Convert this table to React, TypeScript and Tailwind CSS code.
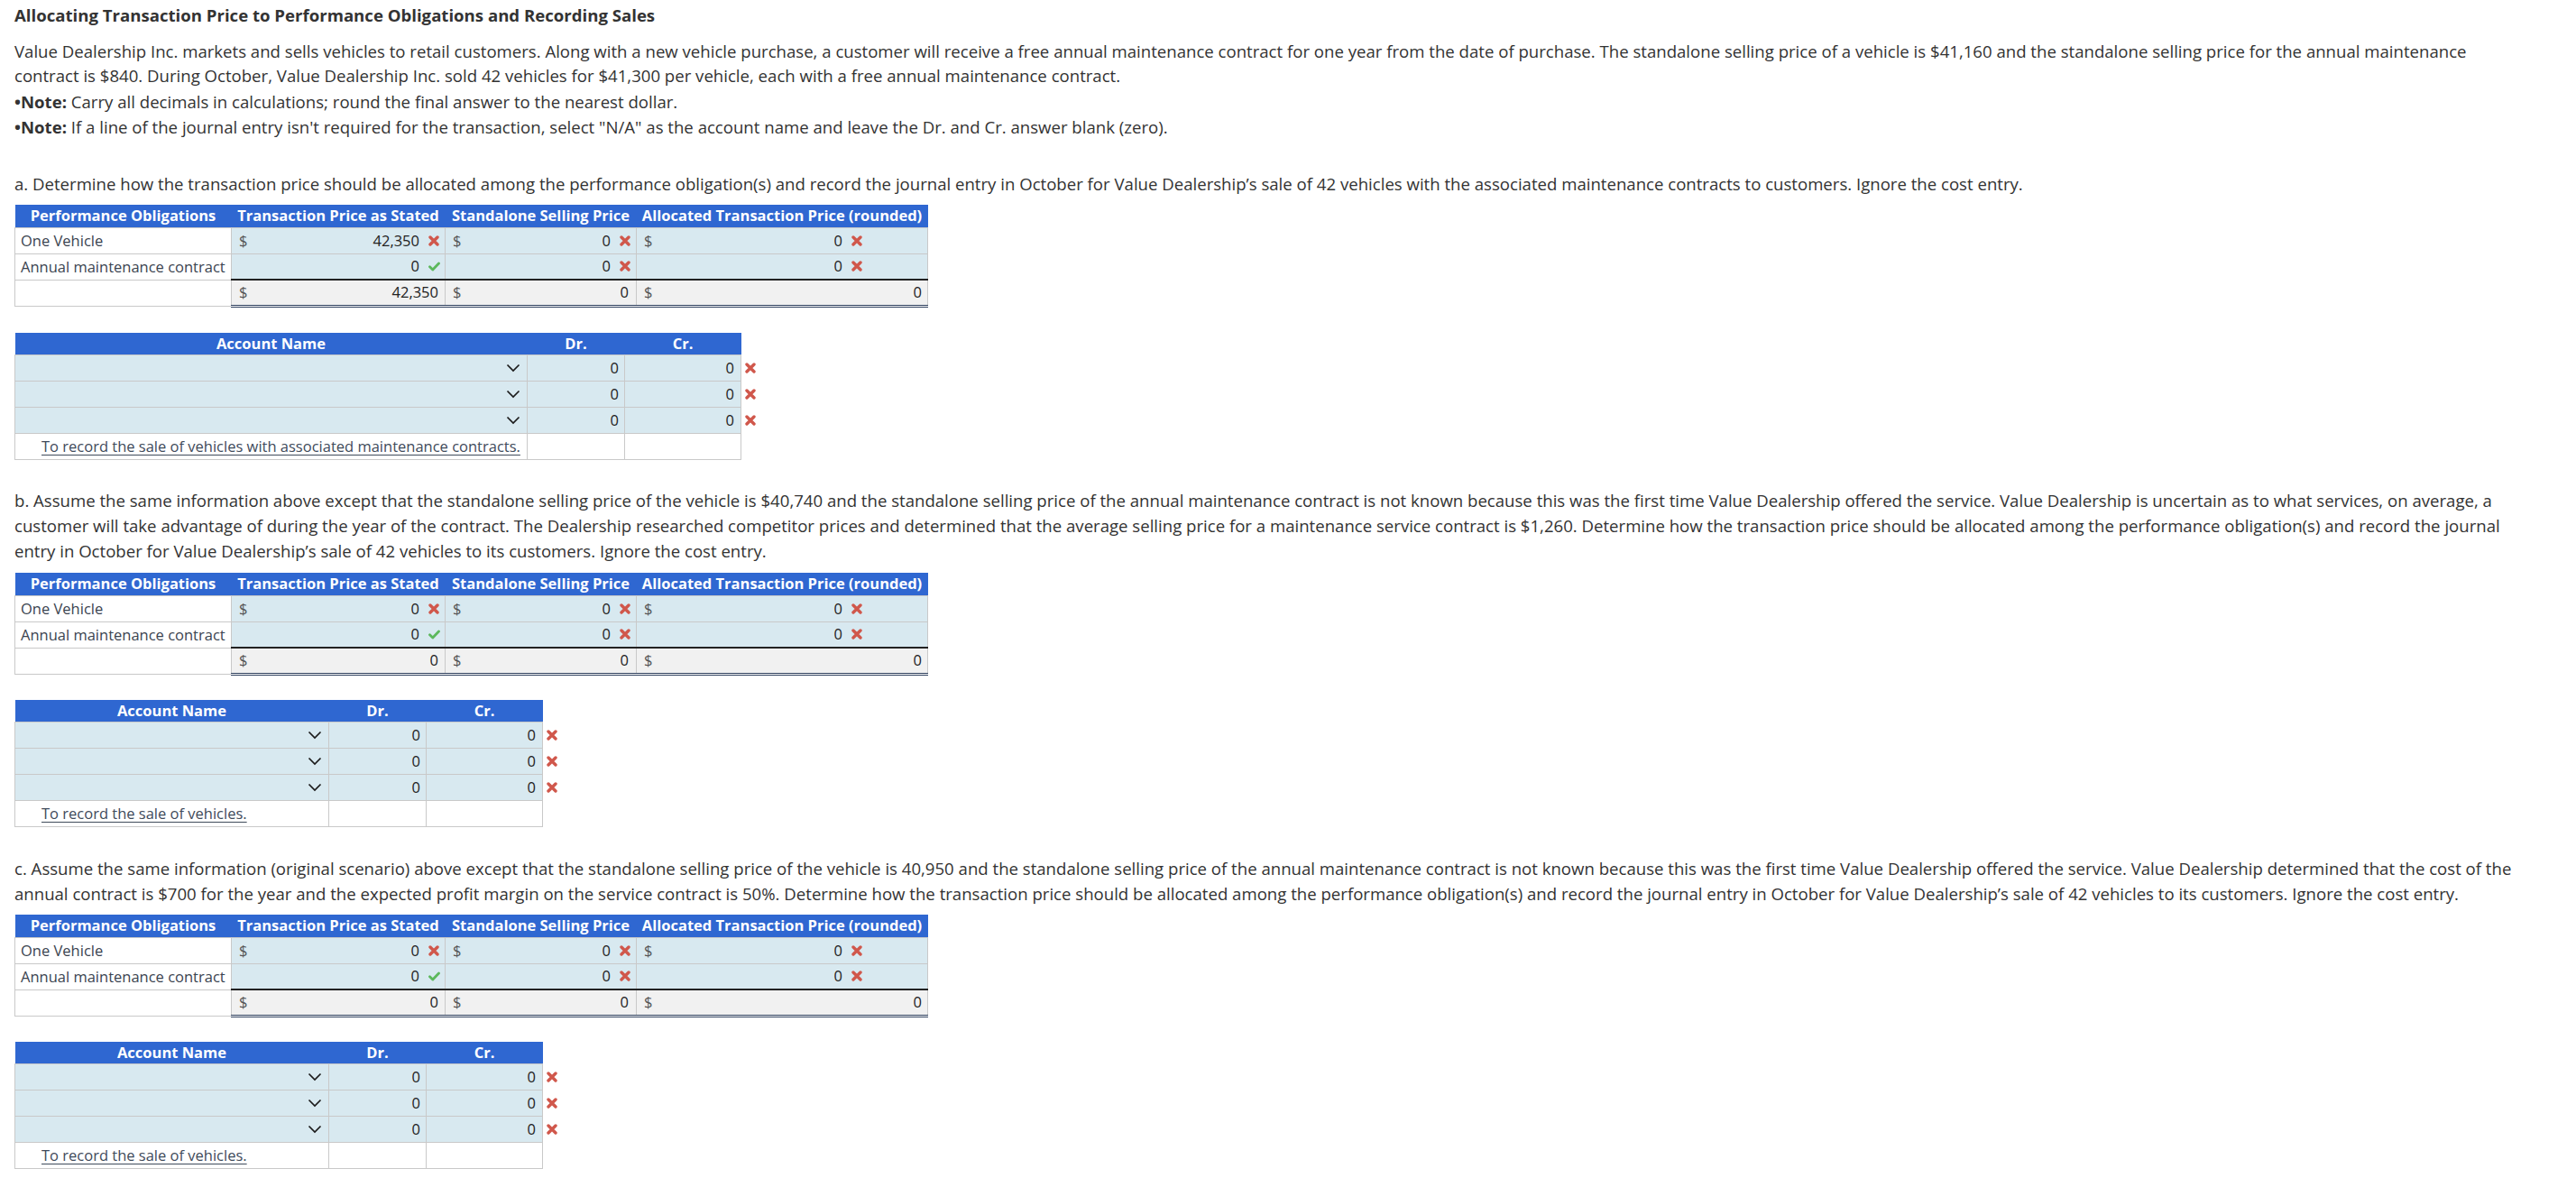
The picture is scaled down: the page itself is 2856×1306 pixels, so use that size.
import React from 'react';

type Mark = 'x' | 'check';

function Cross() {
  return (
    <svg width="12" height="12" viewBox="0 0 12 12" className="block">
      <path d="M2 2 L10 10 M10 2 L2 10" stroke="#d0574b" strokeWidth="3.4" strokeLinecap="round" />
    </svg>
  );
}

function Check() {
  return (
    <svg width="13" height="11" viewBox="0 0 13 11" className="block">
      <path d="M1.5 5.8 L4.8 9 L11.5 2" stroke="#5cb85c" strokeWidth="2.8" fill="none" strokeLinecap="round" strokeLinejoin="round" />
    </svg>
  );
}

function MarkIcon({ mark }: { mark: Mark }) {
  return (
    <span className="ml-[5px] flex w-[22px] shrink-0 items-center justify-center">
      {mark === 'x' ? <Cross /> : <Check />}
    </span>
  );
}

/**
 * One answer cell: optional dollar sign, right-aligned value, grading mark
 */
function AnswerCell({ dollar, value, mark }: { dollar?: boolean; value: string; mark: Mark }) {
  return (
    <div className="flex h-full items-center pr-[1px]">
      <span className="w-[18px] shrink-0 pl-[8px] text-[#555]">{dollar ? '$' : ''}</span>
      <span className="flex-1 text-right text-[#222]">{value}</span>
      <MarkIcon mark={mark} />
    </div>
  );
}

function TotalCell({ value, pr }: { value: string; pr: string }) {
  return (
    <div className={`flex items-center ${pr}`}>
      <span className="pl-[8px] text-[#555]">$</span>
      <span className="flex-1 text-right text-[#222]">{value}</span>
    </div>
  );
}

function PriceTable({ stated, total }: { stated: string; total: string }) {
  const head = 'h-[25px] bg-[#2f67d1] px-[3px] text-center font-bold text-white whitespace-nowrap';
  const label = 'h-[29px] border border-[#c9c9c9] bg-white pl-[6px] text-[#3b4450] whitespace-nowrap';
  const input = 'h-[29px] border border-[#c9c9c9] bg-[#d8e9f0] p-0';
  const sum = 'h-[29px] border-x border-[#c9c9c9] border-t-2 border-t-[#222] border-b-[3px] border-b-[#2c3e5c] border-double bg-[#f1f1f1] p-0';

  return (
    <table className="border-collapse text-[16.5px] leading-[20px]">
      <colgroup>
        <col className="w-[240px]" />
        <col className="w-[237px]" />
        <col className="w-[212px]" />
        <col className="w-[323px]" />
      </colgroup>
      <thead>
        <tr>
          <th className={head}>Performance Obligations</th>
          <th className={head}>Transaction Price as Stated</th>
          <th className={head}>Standalone Selling Price</th>
          <th className={head}>Allocated Transaction Price (rounded)</th>
        </tr>
      </thead>
      <tbody>
        <tr>
          <td className={label}>One Vehicle</td>
          <td className={input}>
            <AnswerCell dollar value={stated} mark="x" />
          </td>
          <td className={input}>
            <AnswerCell dollar value="0" mark="x" />
          </td>
          <td className={input}>
            <div className="w-[256px]">
              <AnswerCell dollar value="0" mark="x" />
            </div>
          </td>
        </tr>
        <tr>
          <td className={label}>Annual maintenance contract</td>
          <td className={input}>
            <AnswerCell value="0" mark="check" />
          </td>
          <td className={input}>
            <AnswerCell value="0" mark="x" />
          </td>
          <td className={input}>
            <div className="w-[256px]">
              <AnswerCell value="0" mark="x" />
            </div>
          </td>
        </tr>
        <tr>
          <td className="h-[29px] border border-[#c9c9c9] bg-white"></td>
          <td className={sum}>
            <TotalCell value={total} pr="pr-[7px]" />
          </td>
          <td className={sum}>
            <TotalCell value="0" pr="pr-[8px]" />
          </td>
          <td className={sum}>
            <TotalCell value="0" pr="pr-[6px]" />
          </td>
        </tr>
      </tbody>
    </table>
  );
}

function Chevron() {
  return (
    <svg width="16" height="10" viewBox="0 0 16 10" className="block">
      <path d="M1.5 1.5 L8 8 L14.5 1.5" stroke="#1b1b1b" strokeWidth="1.7" fill="none" />
    </svg>
  );
}

function JournalTable({ accountWidth, memo }: { accountWidth: string; memo: string }) {
  const head = 'h-[25px] bg-[#2f67d1] text-center font-bold text-white';
  const cell = 'h-[29px] border border-[#c9c9c9] bg-[#d8e9f0] text-right text-[#222]';
  const rows = [0, 1, 2];

  return (
    <table className="border-collapse text-[16.5px] leading-[20px]">
      <colgroup>
        <col className={accountWidth} />
        <col className="w-[108px]" />
        <col className="w-[129px]" />
        <col className="w-[24px]" />
      </colgroup>
      <thead>
        <tr>
          <th className={head}>Account Name</th>
          <th className={head}>Dr.</th>
          <th className={head}>Cr.</th>
          <th className="bg-white"></th>
        </tr>
      </thead>
      <tbody>
        {rows.map((r) => (
          <tr key={r}>
            <td className={`${cell} pr-[7px]`}>
              <div className="flex justify-end">
                <Chevron />
              </div>
            </td>
            <td className={`${cell} pr-[6px]`}>0</td>
            <td className={`${cell} pr-[7px]`}>0</td>
            <td className="pl-[4px]">
              <Cross />
            </td>
          </tr>
        ))}
        <tr>
          <td className="h-[29px] border border-[#c9c9c9] bg-white pl-[29px]">
            <span className="text-[#3f4b5b] underline underline-offset-[3px]">{memo}</span>
          </td>
          <td className="h-[29px] border border-[#c9c9c9] bg-white"></td>
          <td className="h-[29px] border border-[#c9c9c9] bg-white"></td>
          <td></td>
        </tr>
      </tbody>
    </table>
  );
}

export default function App() {
  return (
    <div className="min-h-[1306px] w-[2856px] bg-white pl-[16px] font-['Open_Sans',sans-serif] text-[18.6px] text-[#333]">
      <div className="w-[2786px]">
        <h1 className="pt-[3px] font-bold leading-[28px]">
          Allocating Transaction Price to Performance Obligations and Recording Sales
        </h1>
        <p className="mt-[12px] leading-[27px]">
          Value Dealership Inc. markets and sells vehicles to retail customers. Along with a new vehicle purchase, a
          customer will receive a free annual maintenance contract for one year from the date of purchase. The standalone
          selling price of a vehicle is $41,160 and the standalone selling price for the annual maintenance contract is
          $840. During October, Value Dealership Inc. sold 42 vehicles for $41,300 per vehicle, each with a free annual
          maintenance contract.
        </p>
        <div className="mt-[2px] leading-[28px]">
          <p>
            <b>•Note:</b> Carry all decimals in calculations; round the final answer to the nearest dollar.
          </p>
          <p>
            <b>•Note:</b> If a line of the journal entry isn't required for the transaction, select "N/A" as the account
            name and leave the Dr. and Cr. answer blank (zero).
          </p>
        </div>

        {/* Part a */}
        <p className="mt-[35px] leading-[28px]">
          a. Determine how the transaction price should be allocated among the performance obligation(s) and record the
          journal entry in October for Value Dealership’s sale of 42 vehicles with the associated maintenance contracts
          to customers. Ignore the cost entry.
        </p>
        <div className="mt-[9px]">
          <PriceTable stated="42,350" total="42,350" />
        </div>
        <div className="mt-[28px]">
          <JournalTable
            accountWidth="w-[568px]"
            memo="To record the sale of vehicles with associated maintenance contracts."
          />
        </div>

        {/* Part b */}
        <p className="mt-[31px] leading-[28px]">
          b. Assume the same information above except that the standalone selling price of the vehicle is $40,740 and
          the standalone selling price of the annual maintenance contract is not known because this was the first time
          Value Dealership offered the service. Value Dealership is uncertain as to what services, on average, a customer
          will take advantage of during the year of the contract. The Dealership researched competitor prices and
          determined that the average selling price for a maintenance service contract is $1,260. Determine how the
          transaction price should be allocated among the performance obligation(s) and record the journal entry in
          October for Value Dealership’s sale of 42 vehicles to its customers. Ignore the cost entry.
        </p>
        <div className="mt-[10px]">
          <PriceTable stated="0" total="0" />
        </div>
        <div className="mt-[27px]">
          <JournalTable accountWidth="w-[348px]" memo="To record the sale of vehicles." />
        </div>

        {/* Part c */}
        <p className="mt-[32px] leading-[28px]">
          c. Assume the same information (original scenario) above except that the standalone selling price of the
          vehicle is 40,950 and the standalone selling price of the annual maintenance contract is not known because this
          was the first time Value Dealership offered the service. Value Dealership determined that the cost of the
          annual contract is $700 for the year and the expected profit margin on the service contract is 50%. Determine
          how the transaction price should be allocated among the performance obligation(s) and record the journal entry
          in October for Value Dealership’s sale of 42 vehicles to its customers. Ignore the cost entry.
        </p>
        <div className="mt-[9px]">
          <PriceTable stated="0" total="0" />
        </div>
        <div className="mt-[27px]">
          <JournalTable accountWidth="w-[348px]" memo="To record the sale of vehicles." />
        </div>
      </div>
    </div>
  );
}
